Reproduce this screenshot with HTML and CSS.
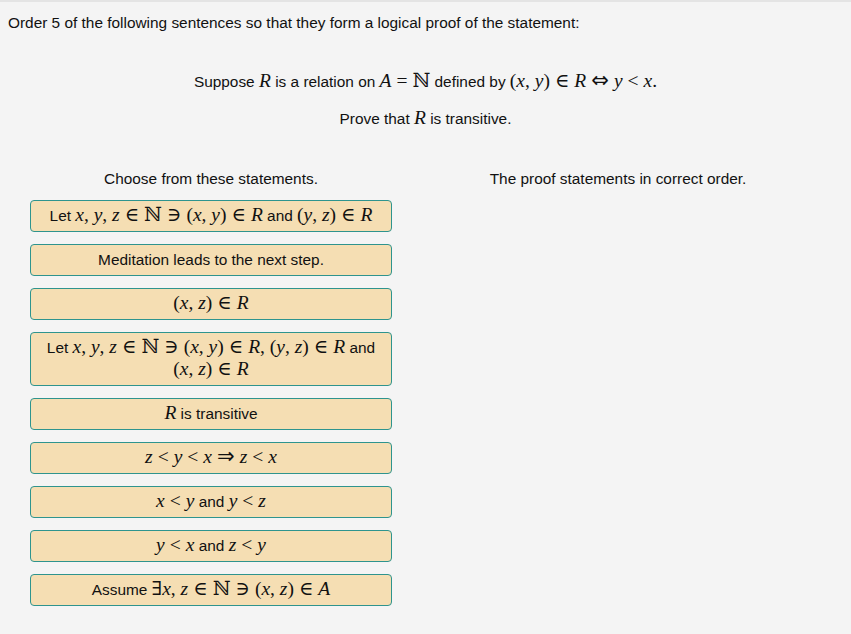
FILE: index.html
```html
<!DOCTYPE html>
<html lang="en">
<head>
    <meta charset="UTF-8">
    <title>Proof Ordering</title>
    <link rel="stylesheet" href="styles.css">
</head>
<body>
    <div class="page">
        <p class="prompt">Order 5 of the following sentences so that they form a logical proof of the statement:</p>

        <div class="statement">
            <p>Suppose <i class="m">R</i> is a relation on <span class="m"><i>A</i><b>=</b>ℕ</span> defined by <span class="m">(<i>x</i>, <i>y</i>)<b>∈</b><i>R</i><b class="arr">⇔</b><i>y</i><b>&lt;</b><i>x</i>.</span></p>
            <p>Prove that <i class="m">R</i> is transitive.</p>
        </div>

        <div class="columns">
            <div class="column">
                <h2>Choose from these statements.</h2>
                <ul class="cards">
                    <li class="card">Let <span class="m"><i>x</i>, <i>y</i>, <i>z</i><b>∈</b>ℕ<b>∋</b>(<i>x</i>, <i>y</i>)<b>∈</b><i>R</i></span> and <span class="m">(<i>y</i>, <i>z</i>)<b>∈</b><i>R</i></span></li>
                    <li class="card">Meditation leads to the next step.</li>
                    <li class="card"><span class="m">(<i>x</i>, <i>z</i>)<b>∈</b><i>R</i></span></li>
                    <li class="card">Let <span class="m"><i>x</i>, <i>y</i>, <i>z</i><b>∈</b>ℕ<b>∋</b>(<i>x</i>, <i>y</i>)<b>∈</b><i>R</i>, (<i>y</i>, <i>z</i>)<b>∈</b><i>R</i></span> and <span class="m">(<i>x</i>, <i>z</i>)<b>∈</b><i>R</i></span></li>
                    <li class="card"><i class="m">R</i> is transitive</li>
                    <li class="card"><span class="m"><i>z</i><b>&lt;</b><i>y</i><b>&lt;</b><i>x</i><b class="arr">⇒</b><i>z</i><b>&lt;</b><i>x</i></span></li>
                    <li class="card"><span class="m"><i>x</i><b>&lt;</b><i>y</i></span> and <span class="m"><i>y</i><b>&lt;</b><i>z</i></span></li>
                    <li class="card"><span class="m"><i>y</i><b>&lt;</b><i>x</i></span> and <span class="m"><i>z</i><b>&lt;</b><i>y</i></span></li>
                    <li class="card">Assume <span class="m">∃<i>x</i>, <i>z</i><b>∈</b>ℕ<b>∋</b>(<i>x</i>, <i>z</i>)<b>∈</b><i>A</i></span></li>
                </ul>
            </div>
            <div class="column">
                <h2>The proof statements in correct order.</h2>
            </div>
        </div>
    </div>
</body>
</html>
```

FILE: styles.css
```css
body {
    margin: 0;
    font-family: Arial, "Liberation Sans", sans-serif;
    font-size: 15.4px;
    color: #111;
    background-color: #f4f4f4;
    border-top: 2px solid #e4e4e4;
}

.page {
    padding: 12px 8px;
}

.prompt {
    margin: 0;
}

.statement {
    text-align: center;
    margin-top: 40px;
}

.statement p {
    margin: 0 0 19px;
}

/* inline math */
.m {
    font-family: "Liberation Serif", "DejaVu Serif", serif;
    font-size: 19.5px;
    font-style: normal;
    line-height: 16px;
}

i.m, .m i {
    font-style: italic;
}

/* relation symbols get TeX-like spacing */
.m b {
    font-weight: normal;
    margin: 0 5px;
}

.m .arr {
    font-family: "DejaVu Sans", sans-serif;
    font-size: 21px;
}

.columns {
    display: grid;
    grid-template-columns: 362px 362px;
    column-gap: 45px;
    padding-left: 22px;
    margin-top: 42px;
}

.column h2 {
    margin: 0 0 12px;
    font-size: 15.4px;
    font-weight: normal;
    text-align: center;
}

.cards {
    list-style: none;
    margin: 0;
    padding: 0;
    display: flex;
    flex-direction: column;
    gap: 12px;
}

.card {
    padding: 4px 10px;
    text-align: center;
    line-height: 22px;
    background-color: #f5deb3;
    border: 1px solid #2e948e;
    border-radius: 4px;
}
```
